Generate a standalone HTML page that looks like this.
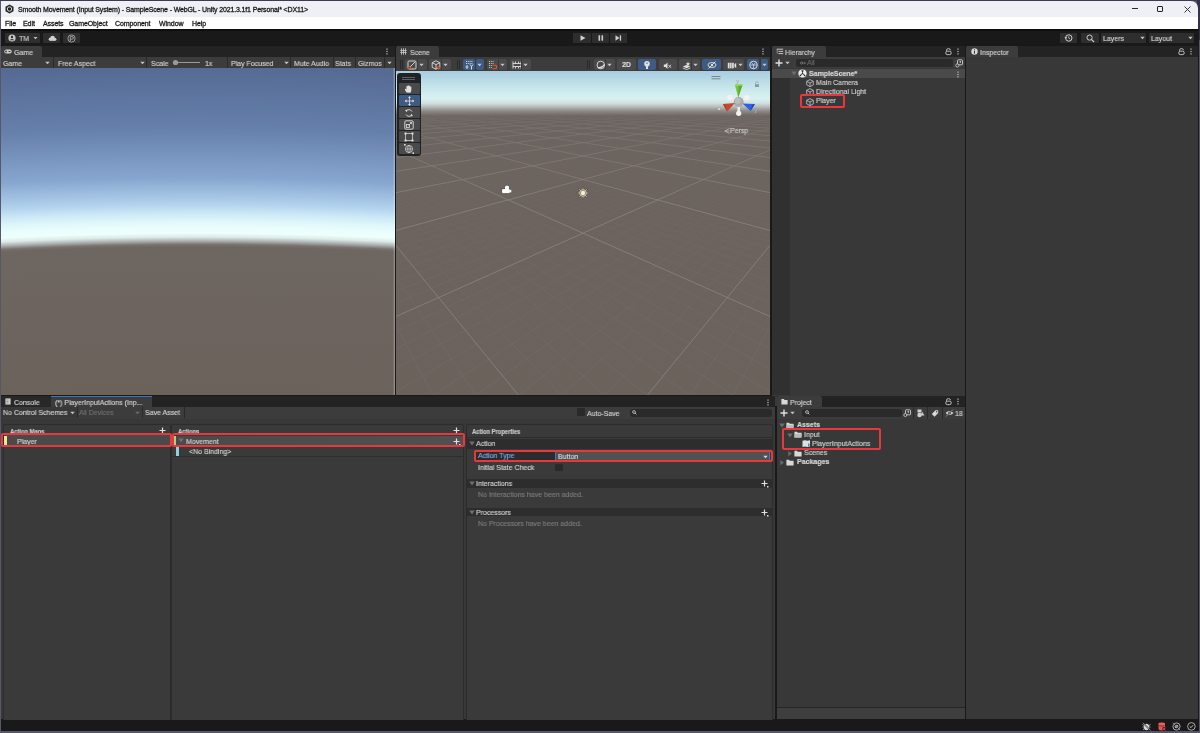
<!DOCTYPE html>
<html><head><meta charset="utf-8">
<style>
*{box-sizing:border-box;margin:0;padding:0}
html,body{width:1200px;height:733px;overflow:hidden;background:#191919;font-family:"Liberation Sans",sans-serif;color:#c4c4c4;position:relative}
.a{position:absolute}
.t{position:absolute;white-space:nowrap;will-change:transform;-webkit-text-stroke:0.18px currentColor}
svg.a{overflow:visible}
</style></head><body>
<div class="a" style="left:0px;top:0px;width:1200px;height:733px;background:#58576a;"></div>
<div class="a" style="left:0px;top:0px;width:1200px;height:1px;background:#3e3a56;"></div>
<div class="a" style="left:1197px;top:0px;width:3px;height:40px;background:#34324a;"></div>
<div class="a" style="left:1px;top:1px;width:1197px;height:17px;background:#eff0f5;border-top-right-radius:7px;border-top-left-radius:0"></div>
<div class="a" style="left:1px;top:17px;width:1197px;height:12px;background:#ffffff;"></div>
<div class="a" style="left:1px;top:29px;width:1198px;height:702px;background:#191919;"></div>
<svg class="a" style="left:5px;top:4px;" width="9" height="10" viewBox="0 0 9 10"><path d="M4.5 0.5L8.5 2.8V7.2L4.5 9.5L0.5 7.2V2.8Z" fill="#222"/><circle cx="4.5" cy="5" r="2.2" fill="none" stroke="#eee" stroke-width="0.9"/></svg>
<div class="t" style="left:17.5px;top:5.57px;font-size:7.00px;line-height:7.00px;color:#1a1a1a;letter-spacing:-0.14px;-webkit-text-stroke:0.3px #1a1a1a">Smooth Movement (Input System) - SampleScene - WebGL - Unity 2021.3.1f1 Personal* &lt;DX11&gt;</div>
<div class="a" style="left:1131.5px;top:8px;width:6.5px;height:1px;background:#2a2a2a;"></div>
<div class="a" style="left:1157px;top:5.8px;width:6.2px;height:6px;border:1px solid #222;border-radius:1px;"></div>
<svg class="a" style="left:1183.5px;top:5.5px;" width="7" height="7" viewBox="0 0 7 7"><path d="M0.5 0.5L6.5 6.5M6.5 0.5L0.5 6.5" stroke="#222" stroke-width="0.9"/></svg>
<div class="t" style="left:4.7px;top:19.57px;font-size:7.00px;line-height:7.00px;color:#1a1a1a;letter-spacing:-0.08px;-webkit-text-stroke:0.3px #1a1a1a">File</div>
<div class="t" style="left:22.5px;top:19.57px;font-size:7.00px;line-height:7.00px;color:#1a1a1a;letter-spacing:-0.08px;-webkit-text-stroke:0.3px #1a1a1a">Edit</div>
<div class="t" style="left:42.5px;top:19.57px;font-size:7.00px;line-height:7.00px;color:#1a1a1a;letter-spacing:-0.08px;-webkit-text-stroke:0.3px #1a1a1a">Assets</div>
<div class="t" style="left:69px;top:19.57px;font-size:7.00px;line-height:7.00px;color:#1a1a1a;letter-spacing:-0.08px;-webkit-text-stroke:0.3px #1a1a1a">GameObject</div>
<div class="t" style="left:114.7px;top:19.57px;font-size:7.00px;line-height:7.00px;color:#1a1a1a;letter-spacing:-0.08px;-webkit-text-stroke:0.3px #1a1a1a">Component</div>
<div class="t" style="left:159px;top:19.57px;font-size:7.00px;line-height:7.00px;color:#1a1a1a;letter-spacing:-0.08px;-webkit-text-stroke:0.3px #1a1a1a">Window</div>
<div class="t" style="left:192px;top:19.57px;font-size:7.00px;line-height:7.00px;color:#1a1a1a;letter-spacing:-0.08px;-webkit-text-stroke:0.3px #1a1a1a">Help</div>
<div class="a" style="left:1px;top:29px;width:1197px;height:2px;background:#0e0e0e;"></div>
<div class="a" style="left:5px;top:33px;width:35px;height:10px;background:#2e2e2e;border-radius:1px"></div>
<svg class="a" style="left:8px;top:34px;" width="8" height="8" viewBox="0 0 8 8"><circle cx="4" cy="4" r="3.6" fill="#c8c8c8"/><circle cx="4" cy="3" r="1.2" fill="#2e2e2e"/><path d="M1.8 6.3Q4 3.8 6.2 6.3" fill="#2e2e2e"/></svg>
<div class="t" style="left:19px;top:35.18px;font-size:7.70px;line-height:7.70px;color:#c4c4c4;transform:scaleX(0.9091);transform-origin:0 0;">TM</div>
<svg class="a" style="left:33px;top:36px;" width="5" height="4" viewBox="0 0 5 4"><path d="M0.5 1L4.5 1L2.5 3.2Z" fill="#c4c4c4"/></svg>
<div class="a" style="left:43px;top:33px;width:17px;height:10px;background:#2e2e2e;border-radius:1px"></div>
<svg class="a" style="left:47.5px;top:34.5px;" width="9" height="7" viewBox="0 0 9 7"><circle cx="4.6" cy="3" r="2.3" fill="#d0d0d0"/><circle cx="2.3" cy="4.2" r="1.6" fill="#d0d0d0"/><circle cx="6.9" cy="4.3" r="1.5" fill="#d0d0d0"/><rect x="2.2" y="3.8" width="4.8" height="2" fill="#d0d0d0"/></svg>
<div class="a" style="left:63px;top:33px;width:17px;height:10px;background:#2e2e2e;border-radius:1px"></div>
<svg class="a" style="left:67px;top:34px;" width="9" height="9" viewBox="0 0 9 9"><circle cx="4.5" cy="4.5" r="3.6" fill="none" stroke="#b8b8b8" stroke-width="0.8"/><path d="M3.3 7V2.6H5Q6.4 2.6 6.4 3.9Q6.4 5.2 5 5.2H3.3" fill="none" stroke="#b8b8b8" stroke-width="0.8"/></svg>
<div class="a" style="left:573px;top:33px;width:18px;height:10px;background:#2d2d2d;border-radius:1px"></div>
<div class="a" style="left:592px;top:33px;width:17px;height:10px;background:#2d2d2d;border-radius:1px"></div>
<div class="a" style="left:610px;top:33px;width:17px;height:10px;background:#2d2d2d;border-radius:1px"></div>
<svg class="a" style="left:579.7px;top:35px;" width="6" height="6" viewBox="0 0 6 6"><path d="M0.5 0.3L5.5 3L0.5 5.7Z" fill="#d0d0d0"/></svg>
<svg class="a" style="left:598px;top:35px;" width="6" height="6" viewBox="0 0 6 6"><rect x="0.5" y="0.3" width="1.6" height="5.4" fill="#d0d0d0"/><rect x="3.5" y="0.3" width="1.6" height="5.4" fill="#d0d0d0"/></svg>
<svg class="a" style="left:615px;top:35px;" width="7" height="6" viewBox="0 0 7 6"><path d="M0.5 0.3L4.5 3L0.5 5.7Z" fill="#d0d0d0"/><rect x="4.8" y="0.3" width="1.3" height="5.4" fill="#d0d0d0"/></svg>
<div class="a" style="left:1060px;top:33px;width:17px;height:10px;background:#2e2e2e;border-radius:1px"></div>
<div class="a" style="left:1081px;top:33px;width:18px;height:10px;background:#2e2e2e;border-radius:1px"></div>
<svg class="a" style="left:1064px;top:34px;" width="9" height="8" viewBox="0 0 9 8"><circle cx="4.8" cy="4" r="3.2" fill="none" stroke="#ccc" stroke-width="1"/><path d="M4.8 2.2V4.2L6.2 5" stroke="#ccc" stroke-width="0.8" fill="none"/><path d="M0.3 3.2L2 4.8L3.2 3" fill="#ccc"/></svg>
<svg class="a" style="left:1086px;top:34px;" width="9" height="9" viewBox="0 0 9 9"><circle cx="3.6" cy="3.6" r="2.6" fill="none" stroke="#ccc" stroke-width="1"/><path d="M5.4 5.4L8 8" stroke="#ccc" stroke-width="1.2"/></svg>
<div class="a" style="left:1101px;top:33px;width:45px;height:10px;background:#2e2e2e;border-radius:1px"></div>
<div class="a" style="left:1149px;top:33px;width:45px;height:10px;background:#2e2e2e;border-radius:1px"></div>
<div class="t" style="left:1103px;top:35.18px;font-size:7.70px;line-height:7.70px;color:#cecece;transform:scaleX(0.9091);transform-origin:0 0;">Layers</div>
<svg class="a" style="left:1140px;top:36px;" width="5" height="4" viewBox="0 0 5 4"><path d="M0.3 0.8L4.7 0.8L2.5 3.2Z" fill="#c4c4c4"/></svg>
<div class="t" style="left:1151px;top:35.18px;font-size:7.70px;line-height:7.70px;color:#cecece;transform:scaleX(0.9091);transform-origin:0 0;">Layout</div>
<svg class="a" style="left:1188px;top:36px;" width="5" height="4" viewBox="0 0 5 4"><path d="M0.3 0.8L4.7 0.8L2.5 3.2Z" fill="#c4c4c4"/></svg>
<div class="a" style="left:1px;top:46px;width:394px;height:11px;background:#232323;"></div>
<div class="a" style="left:1px;top:46px;width:41px;height:11px;background:#3c3c3c;border-radius:2px 2px 0 0"></div>
<svg class="a" style="left:4px;top:49px;" width="8" height="5" viewBox="0 0 8 5"><rect x="0.3" y="0.5" width="7.4" height="4" rx="2" fill="#d0d0d0"/><circle cx="2" cy="2.5" r="0.9" fill="#3c3c3c"/><rect x="4.5" y="2" width="2" height="1" fill="#3c3c3c"/></svg>
<div class="t" style="left:13.7px;top:48.58px;font-size:7.70px;line-height:7.70px;color:#cecece;transform:scaleX(0.9091);transform-origin:0 0;">Game</div>
<svg class="a" style="left:386px;top:48px;" width="2" height="7" viewBox="0 0 2 7"><rect x="0.4" y="0.5" width="1.2" height="1.2" fill="#c4c4c4"/><rect x="0.4" y="2.9" width="1.2" height="1.2" fill="#c4c4c4"/><rect x="0.4" y="5.3" width="1.2" height="1.2" fill="#c4c4c4"/></svg>
<div class="a" style="left:1px;top:57px;width:394px;height:11px;background:#3c3c3c;"></div>
<div class="a" style="left:53px;top:57px;width:1px;height:11px;background:#2a2a2a;"></div>
<div class="a" style="left:146px;top:57px;width:1px;height:11px;background:#2a2a2a;"></div>
<div class="a" style="left:227px;top:57px;width:1px;height:11px;background:#2a2a2a;"></div>
<div class="a" style="left:290px;top:57px;width:1px;height:11px;background:#2a2a2a;"></div>
<div class="a" style="left:333px;top:57px;width:1px;height:11px;background:#2a2a2a;"></div>
<div class="a" style="left:355px;top:57px;width:1px;height:11px;background:#2a2a2a;"></div>
<div class="a" style="left:384px;top:57px;width:1px;height:11px;background:#2a2a2a;"></div>
<div class="t" style="left:3px;top:59.78px;font-size:7.70px;line-height:7.70px;color:#cecece;transform:scaleX(0.9091);transform-origin:0 0;">Game</div>
<svg class="a" style="left:45px;top:61px;" width="5" height="4" viewBox="0 0 5 4"><path d="M0.3 0.8L4.7 0.8L2.5 3.2Z" fill="#c4c4c4"/></svg>
<div class="t" style="left:57.5px;top:59.78px;font-size:7.70px;line-height:7.70px;color:#cecece;transform:scaleX(0.9091);transform-origin:0 0;">Free Aspect</div>
<svg class="a" style="left:139.5px;top:61px;" width="5" height="4" viewBox="0 0 5 4"><path d="M0.3 0.8L4.7 0.8L2.5 3.2Z" fill="#c4c4c4"/></svg>
<div class="t" style="left:150.5px;top:59.78px;font-size:7.70px;line-height:7.70px;color:#cecece;transform:scaleX(0.9091);transform-origin:0 0;">Scale</div>
<div class="a" style="left:175px;top:62.2px;width:25px;height:0.8px;background:#999;"></div>
<svg class="a" style="left:172px;top:59px;" width="7" height="7" viewBox="0 0 7 7"><circle cx="3.5" cy="3.5" r="2.6" fill="#9a9a9a"/></svg>
<div class="t" style="left:204.7px;top:59.78px;font-size:7.70px;line-height:7.70px;color:#cecece;transform:scaleX(0.9091);transform-origin:0 0;">1x</div>
<div class="t" style="left:230.5px;top:59.78px;font-size:7.70px;line-height:7.70px;color:#cecece;transform:scaleX(0.9091);transform-origin:0 0;">Play Focused</div>
<svg class="a" style="left:283.5px;top:61px;" width="5" height="4" viewBox="0 0 5 4"><path d="M0.3 0.8L4.7 0.8L2.5 3.2Z" fill="#c4c4c4"/></svg>
<div class="t" style="left:293.7px;top:59.78px;font-size:7.70px;line-height:7.70px;color:#cecece;transform:scaleX(0.9091);transform-origin:0 0;">Mute Audio</div>
<div class="t" style="left:335.3px;top:59.78px;font-size:7.70px;line-height:7.70px;color:#cecece;transform:scaleX(0.9091);transform-origin:0 0;">Stats</div>
<div class="t" style="left:357.5px;top:59.78px;font-size:7.70px;line-height:7.70px;color:#cecece;transform:scaleX(0.9091);transform-origin:0 0;">Gizmos</div>
<svg class="a" style="left:386.5px;top:61px;" width="5" height="4" viewBox="0 0 5 4"><path d="M0.3 0.8L4.7 0.8L2.5 3.2Z" fill="#c4c4c4"/></svg>
<svg class="a" style="left:1px;top:68px" width="394" height="327" viewBox="0 0 394 327"><defs><radialGradient id="sky" gradientUnits="userSpaceOnUse" cx="197" cy="4057" r="4057" fx="197" fy="4057"><stop offset="0.91965" stop-color="#6b625c"/><stop offset="0.95588" stop-color="#6e6660"/><stop offset="0.95649" stop-color="#787270"/><stop offset="0.95736" stop-color="#aab0ae"/><stop offset="0.95834" stop-color="#dceae8"/><stop offset="0.95933" stop-color="#eefffc"/><stop offset="0.96056" stop-color="#eafefc"/><stop offset="0.96229" stop-color="#dff6fa"/><stop offset="0.96401" stop-color="#cdeaf6"/><stop offset="0.96672" stop-color="#b0d0ec"/><stop offset="0.97289" stop-color="#87a6cf"/><stop offset="0.98521" stop-color="#6580ab"/><stop offset="1.00000" stop-color="#566b94"/></radialGradient></defs><rect width="394" height="327" fill="url(#sky)"/><rect x="392.6" width="1.4" height="327" fill="#ffffff" opacity="0.25"/></svg>
<div class="a" style="left:396px;top:46px;width:374px;height:11px;background:#232323;"></div>
<div class="a" style="left:396px;top:46px;width:43px;height:11px;background:#3c3c3c;border-radius:2px 2px 0 0"></div>
<svg class="a" style="left:400px;top:48px;" width="7" height="7" viewBox="0 0 7 7"><path d="M1.5 0.3V6.7M3.5 0.3V6.7M5.5 0.3V6.7M0.3 2.5H6.7M0.3 4.5H6.7" stroke="#d0d0d0" stroke-width="0.8"/></svg>
<div class="t" style="left:409.6px;top:48.58px;font-size:7.70px;line-height:7.70px;color:#cecece;transform:scaleX(0.9091);transform-origin:0 0;">Scene</div>
<svg class="a" style="left:762px;top:48px;" width="2" height="7" viewBox="0 0 2 7"><rect x="0.4" y="0.5" width="1.2" height="1.2" fill="#c4c4c4"/><rect x="0.4" y="2.9" width="1.2" height="1.2" fill="#c4c4c4"/><rect x="0.4" y="5.3" width="1.2" height="1.2" fill="#c4c4c4"/></svg>
<div class="a" style="left:396px;top:57px;width:374px;height:14px;background:#3c3c3c;"></div>
<div class="a" style="left:396px;top:70.6px;width:374px;height:1.2px;background:#262626;"></div>
<div class="a" style="left:400px;top:60px;width:0.8px;height:9px;background:#2a2a2a;"></div>
<div class="a" style="left:402px;top:60px;width:0.8px;height:9px;background:#2a2a2a;"></div>
<div class="a" style="left:457px;top:60px;width:0.8px;height:9px;background:#2a2a2a;"></div>
<div class="a" style="left:459px;top:60px;width:0.8px;height:9px;background:#2a2a2a;"></div>
<div class="a" style="left:587px;top:60px;width:0.8px;height:9px;background:#2a2a2a;"></div>
<div class="a" style="left:589px;top:60px;width:0.8px;height:9px;background:#2a2a2a;"></div>
<div class="a" style="left:405.3px;top:59px;width:21.4px;height:11px;background:#4a4a4a;border-radius:2px"></div>
<div class="a" style="left:429px;top:59px;width:21.7px;height:11px;background:#4a4a4a;border-radius:2px"></div>
<div class="a" style="left:463px;top:59px;width:12px;height:11px;background:#3e5b83;border-radius:2px"></div>
<div class="a" style="left:475.5px;top:59px;width:8.5px;height:11px;background:#3e5b83;border-radius:2px"></div>
<div class="a" style="left:486.5px;top:59px;width:20.5px;height:11px;background:#4a4a4a;border-radius:2px"></div>
<div class="a" style="left:509.8px;top:59px;width:21px;height:11px;background:#4a4a4a;border-radius:2px"></div>
<div class="a" style="left:593.8px;top:59px;width:21.2px;height:11px;background:#4a4a4a;border-radius:2px"></div>
<div class="a" style="left:617.4px;top:59px;width:18.3px;height:11px;background:#4a4a4a;border-radius:2px"></div>
<div class="a" style="left:638px;top:59px;width:18px;height:11px;background:#3e5b83;border-radius:2px"></div>
<div class="a" style="left:658.8px;top:59px;width:18px;height:11px;background:#4a4a4a;border-radius:2px"></div>
<div class="a" style="left:679px;top:59px;width:21px;height:11px;background:#4a4a4a;border-radius:2px"></div>
<div class="a" style="left:702.2px;top:59px;width:18.4px;height:11px;background:#3e5b83;border-radius:2px"></div>
<div class="a" style="left:723px;top:59px;width:21px;height:11px;background:#4a4a4a;border-radius:2px"></div>
<div class="a" style="left:746.9px;top:59px;width:12.5px;height:11px;background:#3e5b83;border-radius:2px"></div>
<div class="a" style="left:759.9px;top:59px;width:8px;height:11px;background:#3e5b83;border-radius:2px"></div>
<svg class="a" style="left:418.5px;top:62.5px;" width="5" height="4" viewBox="0 0 5 4"><path d="M0.3 0.8L4.7 0.8L2.5 3.2Z" fill="#c4c4c4"/></svg>
<svg class="a" style="left:442.5px;top:62.5px;" width="5" height="4" viewBox="0 0 5 4"><path d="M0.3 0.8L4.7 0.8L2.5 3.2Z" fill="#c4c4c4"/></svg>
<svg class="a" style="left:477px;top:62.5px;" width="5" height="4" viewBox="0 0 5 4"><path d="M0.3 0.8L4.7 0.8L2.5 3.2Z" fill="#c4c4c4"/></svg>
<svg class="a" style="left:499.5px;top:62.5px;" width="5" height="4" viewBox="0 0 5 4"><path d="M0.3 0.8L4.7 0.8L2.5 3.2Z" fill="#c4c4c4"/></svg>
<svg class="a" style="left:522.5px;top:62.5px;" width="5" height="4" viewBox="0 0 5 4"><path d="M0.3 0.8L4.7 0.8L2.5 3.2Z" fill="#c4c4c4"/></svg>
<svg class="a" style="left:607px;top:62.5px;" width="5" height="4" viewBox="0 0 5 4"><path d="M0.3 0.8L4.7 0.8L2.5 3.2Z" fill="#c4c4c4"/></svg>
<svg class="a" style="left:692.5px;top:62.5px;" width="5" height="4" viewBox="0 0 5 4"><path d="M0.3 0.8L4.7 0.8L2.5 3.2Z" fill="#c4c4c4"/></svg>
<svg class="a" style="left:738px;top:62.5px;" width="5" height="4" viewBox="0 0 5 4"><path d="M0.3 0.8L4.7 0.8L2.5 3.2Z" fill="#c4c4c4"/></svg>
<svg class="a" style="left:761.5px;top:62.5px;" width="5" height="4" viewBox="0 0 5 4"><path d="M0.3 0.8L4.7 0.8L2.5 3.2Z" fill="#c4c4c4"/></svg>
<div class="t" style="left:622px;top:61.38px;font-size:7.70px;line-height:7.70px;color:#dedede;font-weight:bold;transform:scaleX(0.9091);transform-origin:0 0;">2D</div>
<div class="a" style="left:396px;top:71px;width:374px;height:324px;background:linear-gradient(#a8cce0 0px,#c4e4ea 15px,#d8f2f2 27px,#d2e2e2 32px,#b4bab8 36px,#8e8a86 40px,#6c6460 45px,#6b625c 323px);"></div>
<svg class="a" style="left:396px;top:71px" width="374" height="324" viewBox="0 0 374 324"><defs><linearGradient id="fg" x1="0" y1="0" x2="0" y2="324" gradientUnits="userSpaceOnUse"><stop offset="0" stop-color="#000"/><stop offset="0.12" stop-color="#000"/><stop offset="0.175" stop-color="#777"/><stop offset="0.4" stop-color="#fff"/><stop offset="1" stop-color="#fff"/></linearGradient><linearGradient id="fg2" x1="0" y1="0" x2="0" y2="324" gradientUnits="userSpaceOnUse"><stop offset="0" stop-color="#000"/><stop offset="0.13" stop-color="#000"/><stop offset="0.3" stop-color="#444"/><stop offset="0.65" stop-color="#ccc"/><stop offset="1" stop-color="#fff"/></linearGradient><mask id="mk"><rect width="374" height="324" fill="url(#fg)"/></mask><mask id="mk2"><rect width="374" height="324" fill="url(#fg2)"/></mask></defs><path d="M36.7 324.0L0.0 255.0M337.1 324.0L374.0 254.8M79.5 324.0L0.0 206.2M294.3 324.0L374.0 206.1M165.1 324.0L0.0 152.1M208.8 324.0L374.0 152.0M207.9 324.0L0.0 135.6M166.0 324.0L374.0 135.5M250.7 324.0L0.0 122.8M123.2 324.0L374.0 122.7M293.5 324.0L0.0 112.7M80.4 324.0L374.0 112.6M336.3 324.0L0.0 104.4M37.6 324.0L374.0 104.4M374.0 321.0L0.0 97.6M0.0 320.9L374.0 97.5M374.0 297.7L0.0 91.8M0.0 297.6L374.0 91.8M374.0 277.7L0.0 86.9M0.0 277.7L374.0 86.8M374.0 260.5L0.0 82.6M0.0 260.5L374.0 82.6M374.0 232.3L0.0 75.6M0.0 232.2L374.0 75.6M374.0 220.5L0.0 72.7M0.0 220.5L374.0 72.7M374.0 210.1L0.0 70.1M0.0 210.0L374.0 70.1M374.0 200.6L0.0 67.8M0.0 200.6L374.0 67.8M374.0 192.1L0.0 65.7M0.0 192.1L374.0 65.7M374.0 184.4L0.0 63.8M0.0 184.3L374.0 63.7M374.0 177.3L0.0 62.0M0.0 177.3L374.0 62.0M374.0 170.9L0.0 60.4M0.0 170.8L374.0 60.4M374.0 164.9L0.0 59.0M0.0 164.9L374.0 58.9M374.0 154.4L0.0 56.4M0.0 154.4L374.0 56.3M374.0 149.7L0.0 55.2M0.0 149.7L374.0 55.2M374.0 145.3L0.0 54.1M0.0 145.3L374.0 54.1M374.0 141.3L0.0 53.1M0.0 141.2L374.0 53.1M374.0 137.5L0.0 52.2M0.0 137.4L374.0 52.1M374.0 133.9L0.0 51.3M0.0 133.9L374.0 51.3M374.0 130.5L0.0 50.5M0.0 130.5L374.0 50.4M374.0 127.4L0.0 49.7M0.0 127.3L374.0 49.6M374.0 124.4L0.0 48.9M0.0 124.4L374.0 48.9M374.0 118.9L0.0 47.6M0.0 118.9L374.0 47.6M374.0 116.4L0.0 47.0M0.0 116.4L374.0 46.9M374.0 114.0L0.0 46.4M0.0 114.0L374.0 46.4M374.0 111.8L0.0 45.8M0.0 111.8L374.0 45.8M374.0 109.6L0.0 45.3M0.0 109.6L374.0 45.3M374.0 107.6L0.0 44.8M0.0 107.6L374.0 44.8M374.0 105.6L0.0 44.3M0.0 105.6L374.0 44.3M374.0 103.8L0.0 43.8M-0.0 103.7L374.0 43.8M374.0 102.0L0.0 43.4M0.0 102.0L374.0 43.4M374.0 98.7L0.0 42.6M0.0 98.6L374.0 42.5M374.0 97.1L0.0 42.2M0.0 97.1L374.0 42.2M374.0 95.6L0.0 41.8M0.0 95.6L374.0 41.8M374.0 94.2L0.0 41.5M0.0 94.1L374.0 41.4M374.0 92.8L1.4 41.3M0.0 92.8L372.4 41.3M374.0 91.4L3.9 41.3M0.0 91.4L370.0 41.3M374.0 90.2L6.3 41.3M0.0 90.2L367.5 41.3M374.0 88.9L8.8 41.3M0.0 88.9L365.1 41.3M374.0 87.8L11.2 41.3M0.0 87.7L362.6 41.3M374.0 85.5L16.1 41.3M0.0 85.5L357.7 41.3M374.0 84.5L18.6 41.3M0.0 84.4L355.3 41.3M374.0 83.4L21.1 41.3M0.0 83.4L352.8 41.3M374.0 82.4L23.5 41.3M0.0 82.4L350.4 41.3M374.0 81.5L26.0 41.3M0.0 81.5L347.9 41.3M374.0 80.5L28.4 41.3M0.0 80.5L345.5 41.3M374.0 79.6L30.9 41.3M0.0 79.6L343.0 41.3M374.0 78.8L33.3 41.3M0.0 78.8L340.6 41.3M374.0 77.9L35.8 41.3M0.0 77.9L338.1 41.3M374.0 76.3L40.7 41.3M0.0 76.3L333.2 41.3M374.0 75.5L43.1 41.3M0.0 75.5L330.7 41.3M374.0 74.8L45.6 41.3M0.0 74.8L328.3 41.3M374.0 74.1L48.0 41.3M0.0 74.1L325.8 41.3M374.0 73.4L50.5 41.3M0.0 73.4L323.4 41.3M374.0 72.7L52.9 41.3M0.0 72.7L320.9 41.3M374.0 72.0L55.4 41.3M0.0 72.0L318.5 41.3M374.0 71.4L57.8 41.3M0.0 71.3L316.0 41.3M374.0 70.7L60.3 41.3M0.0 70.7L313.6 41.3M374.0 69.5L65.2 41.3M0.0 69.5L308.7 41.3M374.0 68.9L67.7 41.3M0.0 68.9L306.2 41.3M374.0 68.4L70.1 41.3M0.0 68.3L303.8 41.3M374.0 67.8L72.6 41.3M0.0 67.8L301.3 41.3M374.0 67.3L75.0 41.3M0.0 67.3L298.9 41.3M374.0 66.7L77.5 41.3M0.0 66.7L296.4 41.3M374.0 66.2L79.9 41.3M0.0 66.2L294.0 41.3M374.0 65.7L82.4 41.3M0.0 65.7L291.5 41.3M374.0 65.2L84.8 41.3M0.0 65.2L289.0 41.3M374.0 64.3L89.7 41.3M0.0 64.3L284.1 41.3M374.0 63.8L92.2 41.3M0.0 63.8L281.7 41.3M374.0 63.4L94.6 41.3M0.0 63.4L279.2 41.3M374.0 62.9L97.1 41.3M0.0 62.9L276.8 41.3M374.0 62.5L99.5 41.3M0.0 62.5L274.3 41.3M374.0 62.1L102.0 41.3M0.0 62.1L271.9 41.3M374.0 61.7L104.4 41.3M0.0 61.7L269.4 41.3M374.0 61.3L106.9 41.3M0.0 61.3L267.0 41.3M374.0 60.9L109.3 41.3M0.0 60.9L264.5 41.3M374.0 60.1L114.3 41.3M0.0 60.1L259.6 41.3M374.0 59.8L116.7 41.3M0.0 59.8L257.2 41.3M374.0 59.4L119.2 41.3M0.0 59.4L254.7 41.3M374.0 59.0L121.6 41.3M0.0 59.0L252.3 41.3M374.0 58.7L124.1 41.3M0.0 58.7L249.8 41.3M374.0 58.4L126.5 41.3M0.0 58.3L247.4 41.3M374.0 58.0L129.0 41.3M0.0 58.0L244.9 41.3M374.0 57.7L131.4 41.3M0.0 57.7L242.4 41.3M374.0 57.4L133.9 41.3M0.0 57.4L240.0 41.3M374.0 56.8L138.8 41.3M0.0 56.7L235.1 41.3M374.0 56.5L141.2 41.3M0.0 56.4L232.6 41.3M374.0 56.2L143.7 41.3M0.0 56.1L230.2 41.3M374.0 55.9L146.1 41.3M0.0 55.9L227.7 41.3M374.0 55.6L148.6 41.3M0.0 55.6L225.3 41.3M374.0 55.3L151.0 41.3M0.0 55.3L222.8 41.3M374.0 55.0L153.5 41.3M0.0 55.0L220.4 41.3M374.0 54.7L156.0 41.3M0.0 54.7L217.9 41.3M374.0 54.5L158.4 41.3M0.0 54.5L215.5 41.3M374.0 54.0L163.3 41.3M0.0 54.0L210.6 41.3M374.0 53.7L165.8 41.3M0.0 53.7L208.1 41.3M374.0 53.5L168.2 41.3M0.0 53.4L205.7 41.3M374.0 53.2L170.7 41.3M0.0 53.2L203.2 41.3M374.0 53.0L173.1 41.3M0.0 53.0L200.8 41.3M374.0 52.7L175.6 41.3M0.0 52.7L198.3 41.3M374.0 52.5L178.0 41.3M0.0 52.5L195.8 41.3M374.0 52.3L180.5 41.3M0.0 52.3L193.4 41.3M374.0 52.0L182.9 41.3M0.0 52.0L190.9 41.3M374.0 51.6L187.8 41.3M0.0 51.6L186.0 41.3M374.0 51.4L190.3 41.3M0.0 51.4L183.6 41.3M374.0 51.2L192.7 41.3M0.0 51.2L181.1 41.3M374.0 51.0L195.2 41.3M0.0 51.0L178.7 41.3M374.0 50.8L197.6 41.3M0.0 50.8L176.2 41.3M374.0 50.6L200.1 41.3M0.0 50.6L173.8 41.3M374.0 50.4L202.6 41.3M0.0 50.4L171.3 41.3M374.0 50.2L205.0 41.3M0.0 50.2L168.9 41.3M374.0 50.0L207.5 41.3M0.0 50.0L166.4 41.3M374.0 49.6L212.4 41.3M0.0 49.6L161.5 41.3M374.0 49.4L214.8 41.3M0.0 49.4L159.1 41.3M374.0 49.2L217.3 41.3M0.0 49.2L156.6 41.3M374.0 49.0L219.7 41.3M0.0 49.0L154.2 41.3M374.0 48.9L222.2 41.3M0.0 48.9L151.7 41.3M374.0 48.7L224.6 41.3M0.0 48.7L149.2 41.3M374.0 48.5L227.1 41.3M0.0 48.5L146.8 41.3M374.0 48.4L229.5 41.3M0.0 48.3L144.3 41.3M374.0 48.2L232.0 41.3M0.0 48.2L141.9 41.3M374.0 47.9L236.9 41.3M0.0 47.9L137.0 41.3M374.0 47.7L239.3 41.3M0.0 47.7L134.5 41.3M374.0 47.5L241.8 41.3M0.0 47.5L132.1 41.3M374.0 47.4L244.2 41.3M0.0 47.4L129.6 41.3M374.0 47.2L246.7 41.3M0.0 47.2L127.2 41.3M374.0 47.1L249.2 41.3M0.0 47.1L124.7 41.3M374.0 46.9L251.6 41.3M0.0 46.9L122.3 41.3M374.0 46.8L254.1 41.3M0.0 46.8L119.8 41.3M374.0 46.6L256.5 41.3M0.0 46.6L117.4 41.3M374.0 46.3L261.4 41.3M0.0 46.3L112.5 41.3M374.0 46.2L263.9 41.3M0.0 46.2L110.0 41.3M374.0 46.1L266.3 41.3M0.0 46.1L107.6 41.3M374.0 45.9L268.8 41.3M0.0 45.9L105.1 41.3M374.0 45.8L271.2 41.3M0.0 45.8L102.6 41.3M374.0 45.7L273.7 41.3M0.0 45.7L100.2 41.3M374.0 45.5L276.1 41.3M0.0 45.5L97.7 41.3M374.0 45.4L278.6 41.3M0.0 45.4L95.3 41.3M374.0 45.3L281.0 41.3M0.0 45.3L92.8 41.3M374.0 45.0L285.9 41.3M0.0 45.0L87.9 41.3M374.0 44.9L288.4 41.3M0.0 44.9L85.5 41.3M374.0 44.8L290.8 41.3M0.0 44.8L83.0 41.3M374.0 44.6L293.3 41.3M0.0 44.6L80.6 41.3M374.0 44.5L295.8 41.3M0.0 44.5L78.1 41.3M374.0 44.4L298.2 41.3M0.0 44.4L75.7 41.3M374.0 44.3L300.7 41.3M0.0 44.3L73.2 41.3M374.0 44.2L303.1 41.3M0.0 44.2L70.8 41.3M374.0 44.1L305.6 41.3M0.0 44.0L68.3 41.3" stroke="#736c67" stroke-width="0.7" fill="none" mask="url(#mk2)"/><path d="M122.3 324.0L0.0 174.5M251.6 324.0L374.0 174.3M374.0 245.5L0.0 78.9M0.0 245.5L374.0 78.9M374.0 159.5L0.0 57.6M0.0 159.4L374.0 57.6M374.0 121.6L0.0 48.2M0.0 121.6L374.0 48.2M374.0 100.3L0.0 43.0M0.0 100.3L374.0 43.0M374.0 86.6L13.7 41.3M0.0 86.6L360.2 41.3M374.0 77.1L38.2 41.3M0.0 77.1L335.7 41.3M374.0 70.1L62.7 41.3M0.0 70.1L311.1 41.3M374.0 64.7L87.3 41.3M0.0 64.7L286.6 41.3M374.0 60.5L111.8 41.3M0.0 60.5L262.1 41.3M374.0 57.1L136.3 41.3M0.0 57.1L237.5 41.3M374.0 54.2L160.9 41.3M0.0 54.2L213.0 41.3M374.0 51.8L185.4 41.3M0.0 51.8L188.5 41.3M374.0 49.8L209.9 41.3M0.0 49.8L164.0 41.3M374.0 48.0L234.4 41.3M0.0 48.0L139.4 41.3M374.0 46.5L259.0 41.3M0.0 46.5L114.9 41.3M374.0 45.1L283.5 41.3M0.0 45.1L90.4 41.3M374.0 43.9L308.0 41.3M0.0 43.9L65.9 41.3" stroke="#88827e" stroke-width="0.85" fill="none" mask="url(#mk)"/></svg>
<div class="a" style="left:397.3px;top:73.3px;width:23.7px;height:82.5px;background:#1f2326;border-radius:3px"></div>
<div class="a" style="left:402px;top:76.5px;width:13px;height:0.8px;background:#5a6066;"></div>
<div class="a" style="left:402px;top:78.5px;width:13px;height:0.8px;background:#5a6066;"></div>
<div class="a" style="left:398.8px;top:83px;width:20.9px;height:11.2px;background:#4a4a4a;border-radius:1px"></div>
<div class="a" style="left:398.8px;top:94.5px;width:20.9px;height:11.2px;background:#3e5b83;border-radius:1px"></div>
<div class="a" style="left:398.8px;top:106.5px;width:20.9px;height:11.2px;background:#4a4a4a;border-radius:1px"></div>
<div class="a" style="left:398.8px;top:118.5px;width:20.9px;height:11.2px;background:#4a4a4a;border-radius:1px"></div>
<div class="a" style="left:398.8px;top:130.5px;width:20.9px;height:11.2px;background:#4a4a4a;border-radius:1px"></div>
<div class="a" style="left:398.8px;top:142.5px;width:20.9px;height:11.2px;background:#4a4a4a;border-radius:1px"></div>
<svg class="a" style="left:700px;top:70px" width="70" height="70" viewBox="0 0 70 70"><path d="M11.5 6.5H20.5M11.5 8.8H20.5" stroke="#6e7e84" stroke-width="0.9"/><path d="M38.7 32L30 27.7M38.7 32L46.8 27.7M38.7 32V43.5" stroke="#ececec" stroke-width="2.6" stroke-linecap="round"/><circle cx="30" cy="27.7" r="2.7" fill="#f2f2f2"/><circle cx="46.8" cy="27.7" r="2.7" fill="#f2f2f2"/><circle cx="38.7" cy="43.3" r="2.6" fill="#f2f2f2"/><circle cx="38.7" cy="32" r="5" fill="#a9a9a9"/><circle cx="37.8" cy="30.8" r="3" fill="#bdbdbd"/><path d="M34.9 14.8L42.5 14.8L38.2 27.5Z" fill="#74c83c"/><path d="M38.7 14.8L42.5 14.8L38.2 27.5Z" fill="#5aa82c"/><ellipse cx="38.7" cy="14.9" rx="3.8" ry="0.9" fill="#8ee05a"/><path d="M22.9 33.9L34.9 33L27.2 41.5Z" fill="#c8462e"/><path d="M22.9 33.9L27.2 41.5L25 35Z" fill="#a83422"/><path d="M42.5 33.4L54.9 33.9L50.6 41.1Z" fill="#2f62dc"/><path d="M54.9 33.9L50.6 41.1L52 35Z" fill="#2048b0"/><text x="36.2" y="13" font-size="5.5" fill="#9a9a9a" font-family="Liberation Sans">y</text><rect x="18.2" y="38.2" width="1.8" height="1.8" fill="#d8d8d8"/><text x="54.5" y="42.5" font-size="5" fill="#b8b8b8" font-family="Liberation Sans">z</text><path d="M55.5 14.5V13.2Q55.5 11.8 57 11.8Q58.5 11.8 58.5 13.2" fill="none" stroke="#8a9aa0" stroke-width="0.7"/><rect x="55" y="14.2" width="4" height="2.8" fill="#8a9aa0"/></svg>
<div class="t" style="left:730px;top:127.18px;font-size:7.70px;line-height:7.70px;color:#c8c8c8;transform:scaleX(0.9091);transform-origin:0 0;">Persp</div>
<svg class="a" style="left:724px;top:128px;" width="6" height="6" viewBox="0 0 6 6"><path d="M5.5 0.5L0.8 3L5.5 5.5M5.5 3H1" stroke="#c8c8c8" stroke-width="0.7" fill="none"/></svg>
<div class="a" style="left:772px;top:46px;width:193px;height:11px;background:#232323;"></div>
<div class="a" style="left:772px;top:46px;width:53.6px;height:11px;background:#3c3c3c;border-radius:2px 2px 0 0"></div>
<svg class="a" style="left:775.5px;top:48px;" width="8" height="7" viewBox="0 0 8 7"><path d="M0.8 1.2H7.2M2.5 3.4H7.2M2.5 5.6H7.2" stroke="#c8c8c8" stroke-width="1"/><path d="M1.2 1.2V5.6" stroke="#c8c8c8" stroke-width="0.6"/></svg>
<div class="t" style="left:785px;top:48.58px;font-size:7.70px;line-height:7.70px;color:#cecece;transform:scaleX(0.9091);transform-origin:0 0;">Hierarchy</div>
<svg class="a" style="left:945px;top:48px;" width="7" height="7" viewBox="0 0 7 7"><path d="M1.5 3V2.2Q1.5 0.6 3.5 0.6Q5.5 0.6 5.5 2.2" fill="none" stroke="#c4c4c4" stroke-width="0.9"/><rect x="0.8" y="3.2" width="5.4" height="3.4" rx="1.5" fill="none" stroke="#c4c4c4" stroke-width="1"/></svg>
<svg class="a" style="left:957px;top:48px;" width="2" height="7" viewBox="0 0 2 7"><rect x="0.4" y="0.5" width="1.2" height="1.2" fill="#c4c4c4"/><rect x="0.4" y="2.9" width="1.2" height="1.2" fill="#c4c4c4"/><rect x="0.4" y="5.3" width="1.2" height="1.2" fill="#c4c4c4"/></svg>
<div class="a" style="left:772px;top:57px;width:193px;height:11px;background:#3c3c3c;"></div>
<div class="a" style="left:772px;top:68px;width:193px;height:338px;background:#383838;"></div>
<div class="a" style="left:772px;top:78px;width:18px;height:317px;background:#303030;"></div>
<svg class="a" style="left:775px;top:59px;" width="8" height="8" viewBox="0 0 8 8"><path d="M4 0.5V7.5M0.5 4H7.5" stroke="#e0e0e0" stroke-width="1.4"/></svg>
<svg class="a" style="left:784.5px;top:61px;" width="5" height="4" viewBox="0 0 5 4"><path d="M0.3 0.8L4.7 0.8L2.5 3.2Z" fill="#c4c4c4"/></svg>
<div class="a" style="left:796.2px;top:58.9px;width:157px;height:7.9px;background:#2a2a2a;border-radius:2px"></div>
<div class="t" style="left:807px;top:59.28px;font-size:7.70px;line-height:7.70px;color:#6a6a6a;transform:scaleX(0.9091);transform-origin:0 0;">All</div>
<div class="a" style="left:772px;top:69.3px;width:193px;height:8.5px;background:#4a4a4a;"></div>
<svg class="a" style="left:790.5px;top:70.5px;" width="6" height="5" viewBox="0 0 6 5"><path d="M0.2 0.5L5.8 0.5L3 4.6Z" fill="#6e6e6e"/></svg>
<svg class="a" style="left:797.5px;top:69.3px;" width="9" height="9" viewBox="0 0 9 9"><circle cx="4.5" cy="4.5" r="4.1" fill="#eeeeee"/><path d="M4.5 4.5L3.3 1.2H5.7Z M4.5 4.5L1.3 6.2L2.5 7.6Z M4.5 4.5L7.7 6.2L6.5 7.6Z" fill="#2a2a2a"/><circle cx="4.5" cy="4.5" r="0.8" fill="#2a2a2a"/></svg>
<div class="t" style="left:808.7px;top:69.98px;font-size:7.70px;line-height:7.70px;color:#d8d8d8;font-weight:bold;transform:scaleX(0.9091);transform-origin:0 0;">SampleScene*</div>
<svg class="a" style="left:957px;top:70.5px;" width="2" height="7" viewBox="0 0 2 7"><rect x="0.4" y="0.5" width="1.2" height="1.2" fill="#c4c4c4"/><rect x="0.4" y="2.9" width="1.2" height="1.2" fill="#c4c4c4"/><rect x="0.4" y="5.3" width="1.2" height="1.2" fill="#c4c4c4"/></svg>
<svg class="a" style="left:806px;top:79.2px;" width="8" height="8" viewBox="0 0 8 8"><path d="M4 0.6L7.3 2.3V5.9L4 7.6L0.7 5.9V2.3Z M0.7 2.3L4 4L7.3 2.3M4 4V7.6" fill="none" stroke="#c8c8c8" stroke-width="0.8"/></svg>
<div class="t" style="left:815.75px;top:79.18px;font-size:7.70px;line-height:7.70px;color:#cecece;transform:scaleX(0.9091);transform-origin:0 0;">Main Camera</div>
<svg class="a" style="left:806px;top:88.3px;" width="8" height="8" viewBox="0 0 8 8"><path d="M4 0.6L7.3 2.3V5.9L4 7.6L0.7 5.9V2.3Z M0.7 2.3L4 4L7.3 2.3M4 4V7.6" fill="none" stroke="#c8c8c8" stroke-width="0.8"/></svg>
<div class="t" style="left:815.75px;top:88.28px;font-size:7.70px;line-height:7.70px;color:#cecece;transform:scaleX(0.9091);transform-origin:0 0;">Directional Light</div>
<svg class="a" style="left:806px;top:97.5px;" width="8" height="8" viewBox="0 0 8 8"><path d="M4 0.6L7.3 2.3V5.9L4 7.6L0.7 5.9V2.3Z M0.7 2.3L4 4L7.3 2.3M4 4V7.6" fill="none" stroke="#c8c8c8" stroke-width="0.8"/></svg>
<div class="t" style="left:815.75px;top:97.48px;font-size:7.70px;line-height:7.70px;color:#cecece;transform:scaleX(0.9091);transform-origin:0 0;">Player</div>
<div class="a" style="left:799.9px;top:93.9px;width:45.4px;height:13.8px;border:2px solid #e8383d;border-radius:2px;"></div>
<div class="a" style="left:966px;top:46px;width:232px;height:11px;background:#232323;"></div>
<div class="a" style="left:966px;top:46px;width:52px;height:11px;background:#3c3c3c;border-radius:2px 2px 0 0"></div>
<svg class="a" style="left:971px;top:48px;" width="7" height="7" viewBox="0 0 7 7"><circle cx="3.5" cy="3.5" r="3.2" fill="#d8d8d8"/><rect x="3" y="2.8" width="1" height="2.8" fill="#333"/><rect x="3" y="1.3" width="1" height="0.9" fill="#333"/></svg>
<div class="t" style="left:979.7px;top:48.58px;font-size:7.70px;line-height:7.70px;color:#cecece;transform:scaleX(0.9091);transform-origin:0 0;">Inspector</div>
<svg class="a" style="left:1178px;top:48px;" width="7" height="7" viewBox="0 0 7 7"><path d="M1.5 3V2.2Q1.5 0.6 3.5 0.6Q5.5 0.6 5.5 2.2" fill="none" stroke="#c4c4c4" stroke-width="0.9"/><rect x="0.8" y="3.2" width="5.4" height="3.4" rx="1.5" fill="none" stroke="#c4c4c4" stroke-width="1"/></svg>
<svg class="a" style="left:1190px;top:48px;" width="2" height="7" viewBox="0 0 2 7"><rect x="0.4" y="0.5" width="1.2" height="1.2" fill="#c4c4c4"/><rect x="0.4" y="2.9" width="1.2" height="1.2" fill="#c4c4c4"/><rect x="0.4" y="5.3" width="1.2" height="1.2" fill="#c4c4c4"/></svg>
<div class="a" style="left:966px;top:57px;width:232px;height:662px;background:#383838;"></div>
<div class="a" style="left:1px;top:396px;width:774px;height:11px;background:#232323;"></div>
<div class="a" style="left:1px;top:396px;width:50px;height:11px;background:#282828;"></div>
<svg class="a" style="left:5px;top:398px;" width="6" height="7" viewBox="0 0 6 7"><rect x="0.4" y="0.4" width="5.2" height="6.2" fill="#d0d0d0"/><path d="M1.3 2H3.5M1.3 3.5H3.5M1.3 5H3.5" stroke="#777" stroke-width="0.6"/></svg>
<div class="t" style="left:13.6px;top:398.58px;font-size:7.70px;line-height:7.70px;color:#cecece;transform:scaleX(0.9091);transform-origin:0 0;">Console</div>
<div class="a" style="left:51px;top:396px;width:101px;height:11px;background:#3c3c3c;border-radius:2px 2px 0 0"></div>
<div class="a" style="left:51px;top:396px;width:101px;height:1px;background:#3a79bb;"></div>
<div class="t" style="left:55px;top:398.58px;font-size:7.70px;line-height:7.70px;color:#cecece;transform:scaleX(0.9091);transform-origin:0 0;">(*) PlayerInputActions (Inp...</div>
<svg class="a" style="left:767px;top:398.5px;" width="2" height="7" viewBox="0 0 2 7"><rect x="0.4" y="0.5" width="1.2" height="1.2" fill="#c4c4c4"/><rect x="0.4" y="2.9" width="1.2" height="1.2" fill="#c4c4c4"/><rect x="0.4" y="5.3" width="1.2" height="1.2" fill="#c4c4c4"/></svg>
<div class="a" style="left:1px;top:407px;width:774px;height:12px;background:#3c3c3c;"></div>
<div class="a" style="left:1.25px;top:407px;width:75.5px;height:11px;background:#383838;"></div>
<div class="t" style="left:3px;top:409.18px;font-size:7.70px;line-height:7.70px;color:#cecece;transform:scaleX(0.9091);transform-origin:0 0;">No Control Schemes</div>
<svg class="a" style="left:70px;top:410.5px;" width="5" height="4" viewBox="0 0 5 4"><path d="M0.3 0.8L4.7 0.8L2.5 3.2Z" fill="#c4c4c4"/></svg>
<div class="a" style="left:77px;top:407px;width:1px;height:11px;background:#2a2a2a;"></div>
<div class="a" style="left:141.5px;top:407px;width:1px;height:11px;background:#2a2a2a;"></div>
<div class="a" style="left:183.5px;top:407px;width:1px;height:11px;background:#2a2a2a;"></div>
<div class="t" style="left:79px;top:409.18px;font-size:7.70px;line-height:7.70px;color:#6e6e6e;transform:scaleX(0.9091);transform-origin:0 0;">All Devices</div>
<svg class="a" style="left:134.5px;top:410.5px;" width="5" height="4" viewBox="0 0 5 4"><path d="M0.3 0.8L4.7 0.8L2.5 3.2Z" fill="#6e6e6e"/></svg>
<div class="t" style="left:145px;top:409.18px;font-size:7.70px;line-height:7.70px;color:#cecece;transform:scaleX(0.9091);transform-origin:0 0;">Save Asset</div>
<div class="a" style="left:576.9px;top:408.3px;width:7.7px;height:7.3px;background:#2a2a2a;border-radius:1px"></div>
<div class="t" style="left:587.3px;top:409.98px;font-size:7.70px;line-height:7.70px;color:#cecece;transform:scaleX(0.9091);transform-origin:0 0;">Auto-Save</div>
<div class="a" style="left:629.6px;top:408.5px;width:142px;height:8px;background:#2a2a2a;border-radius:3px"></div>
<svg class="a" style="left:631.5px;top:410px;" width="5" height="5" viewBox="0 0 5 5"><circle cx="2" cy="2" r="1.4" fill="none" stroke="#ccc" stroke-width="0.8"/><path d="M3 3L4.4 4.4" stroke="#ccc" stroke-width="0.9"/></svg>
<div class="a" style="left:1px;top:419px;width:774px;height:300px;background:#383838;"></div>
<div class="a" style="left:2.5px;top:423.5px;width:168px;height:300px;border:1px solid #2c2c2c;border-radius:2px;background:#3a3a3a"></div>
<div class="a" style="left:171px;top:423.5px;width:293px;height:300px;border:1px solid #2c2c2c;border-radius:2px;background:#3a3a3a"></div>
<div class="a" style="left:465.8px;top:423.5px;width:307.5px;height:300px;border:1px solid #2c2c2c;border-radius:2px;background:#3a3a3a"></div>
<div class="t" style="left:9.6px;top:428.50px;font-size:6.38px;line-height:6.38px;color:#c8c8c8;font-weight:bold;transform:scaleX(0.9091);transform-origin:0 0;">Action Maps</div>
<svg class="a" style="left:158.5px;top:426.5px;" width="7" height="7" viewBox="0 0 7 7"><path d="M3.5 0.5V6.5M0.5 3.5H6.5" stroke="#e0e0e0" stroke-width="1.2"/></svg>
<div class="a" style="left:3.5px;top:435.4px;width:166px;height:9.6px;background:#4a4a4a;"></div>
<div class="a" style="left:3.75px;top:435.6px;width:3px;height:9.2px;background:#f2e68a;"></div>
<div class="t" style="left:16.7px;top:437.73px;font-size:7.70px;line-height:7.70px;color:#cecece;transform:scaleX(0.9091);transform-origin:0 0;">Player</div>
<div class="a" style="left:1.25px;top:433.3px;width:171px;height:13.7px;border:2px solid #e8383d;border-radius:2px;"></div>
<div class="t" style="left:178px;top:428.50px;font-size:6.38px;line-height:6.38px;color:#c8c8c8;font-weight:bold;transform:scaleX(0.9091);transform-origin:0 0;">Actions</div>
<svg class="a" style="left:452.5px;top:426.5px;" width="7" height="7" viewBox="0 0 7 7"><path d="M3.5 0.5V6.5M0.5 3.5H6.5" stroke="#e0e0e0" stroke-width="1.2"/></svg>
<div class="a" style="left:172px;top:435.5px;width:291px;height:9.5px;background:#4a4a4a;background:linear-gradient(90deg,#4a4a4a,#505050)"></div>
<div class="a" style="left:172px;top:435.6px;width:3.5px;height:9.3px;background:#9ed58a;"></div>
<svg class="a" style="left:178.0px;top:437.5px;" width="6" height="5" viewBox="0 0 6 5"><path d="M0.2 0.5L5.8 0.5L3 4.6Z" fill="#6e6e6e"/></svg>
<div class="t" style="left:185.5px;top:437.98px;font-size:7.70px;line-height:7.70px;color:#cecece;transform:scaleX(0.9091);transform-origin:0 0;">Movement</div>
<svg class="a" style="left:452.5px;top:437.5px;" width="8" height="8" viewBox="0 0 8 8"><path d="M3.5 0.5V6.5M0.5 3.5H6.5" stroke="#e0e0e0" stroke-width="1.2"/><rect x="6" y="6" width="1.5" height="1.5" fill="#e0e0e0"/></svg>
<div class="a" style="left:175.5px;top:446px;width:3.5px;height:9.5px;background:#8fd0de;"></div>
<div class="t" style="left:189px;top:447.78px;font-size:7.70px;line-height:7.70px;color:#cecece;transform:scaleX(0.9091);transform-origin:0 0;">&lt;No Binding&gt;</div>
<div class="a" style="left:172px;top:456px;width:291px;height:0.8px;background:#2e2e2e;"></div>
<div class="a" style="left:172px;top:433.3px;width:292.5px;height:13.7px;border:2px solid #e8383d;border-radius:2px;"></div>
<div class="t" style="left:472px;top:429.40px;font-size:6.38px;line-height:6.38px;color:#c8c8c8;font-weight:bold;transform:scaleX(0.9091);transform-origin:0 0;">Action Properties</div>
<div class="a" style="left:466.8px;top:436.5px;width:306px;height:0.8px;background:#2c2c2c;"></div>
<div class="a" style="left:467px;top:438.5px;width:305px;height:10px;background:#2d2d2d;"></div>
<svg class="a" style="left:468.5px;top:441.0px;" width="6" height="5" viewBox="0 0 6 5"><path d="M0.2 0.5L5.8 0.5L3 4.6Z" fill="#6e6e6e"/></svg>
<div class="t" style="left:475.5px;top:440.48px;font-size:7.70px;line-height:7.70px;color:#cecece;transform:scaleX(0.9091);transform-origin:0 0;">Action</div>
<div class="a" style="left:474px;top:452px;width:81px;height:8.4px;background:#2c2c2c;"></div>
<div class="t" style="left:478px;top:452.48px;font-size:7.70px;line-height:7.70px;color:#7ba7e8;transform:scaleX(0.9091);transform-origin:0 0;">Action Type</div>
<div class="a" style="left:555px;top:452px;width:214.6px;height:8.4px;background:#515151;border-radius:1px"></div>
<div class="a" style="left:555px;top:452px;width:0.8px;height:8.4px;background:#3a79bb;"></div>
<div class="a" style="left:768.8px;top:452px;width:0.8px;height:8.4px;background:#3a79bb;"></div>
<div class="t" style="left:558px;top:452.78px;font-size:7.70px;line-height:7.70px;color:#d8d8d8;transform:scaleX(0.9091);transform-origin:0 0;">Button</div>
<svg class="a" style="left:762.5px;top:454.5px;" width="5" height="4" viewBox="0 0 5 4"><path d="M0.3 0.8L4.7 0.8L2.5 3.2Z" fill="#d8d8d8"/></svg>
<div class="a" style="left:473.5px;top:450px;width:299.2px;height:11.9px;border:2px solid #e8383d;border-radius:2px;"></div>
<div class="t" style="left:478px;top:463.98px;font-size:7.70px;line-height:7.70px;color:#cecece;transform:scaleX(0.9091);transform-origin:0 0;">Initial State Check</div>
<div class="a" style="left:555.4px;top:463.5px;width:7.5px;height:7.3px;background:#2a2a2a;border-radius:1px"></div>
<div class="a" style="left:467px;top:479px;width:305px;height:8.6px;background:#2d2d2d;"></div>
<svg class="a" style="left:468.5px;top:481.0px;" width="6" height="5" viewBox="0 0 6 5"><path d="M0.2 0.5L5.8 0.5L3 4.6Z" fill="#6e6e6e"/></svg>
<div class="t" style="left:475.6px;top:480.28px;font-size:7.70px;line-height:7.70px;color:#cecece;transform:scaleX(0.9091);transform-origin:0 0;">Interactions</div>
<svg class="a" style="left:761px;top:480px;" width="8" height="8" viewBox="0 0 8 8"><path d="M3.5 0.5V6.5M0.5 3.5H6.5" stroke="#e0e0e0" stroke-width="1.2"/><rect x="6" y="6" width="1.5" height="1.5" fill="#e0e0e0"/></svg>
<div class="t" style="left:477.6px;top:491.48px;font-size:7.70px;line-height:7.70px;color:#7a7a7a;transform:scaleX(0.9091);transform-origin:0 0;">No Interactions have been added.</div>
<div class="a" style="left:467px;top:507.5px;width:305px;height:8.6px;background:#2d2d2d;"></div>
<svg class="a" style="left:468.5px;top:509.5px;" width="6" height="5" viewBox="0 0 6 5"><path d="M0.2 0.5L5.8 0.5L3 4.6Z" fill="#6e6e6e"/></svg>
<div class="t" style="left:475.6px;top:508.78px;font-size:7.70px;line-height:7.70px;color:#cecece;transform:scaleX(0.9091);transform-origin:0 0;">Processors</div>
<svg class="a" style="left:761px;top:508.5px;" width="8" height="8" viewBox="0 0 8 8"><path d="M3.5 0.5V6.5M0.5 3.5H6.5" stroke="#e0e0e0" stroke-width="1.2"/><rect x="6" y="6" width="1.5" height="1.5" fill="#e0e0e0"/></svg>
<div class="t" style="left:477.6px;top:519.88px;font-size:7.70px;line-height:7.70px;color:#7a7a7a;transform:scaleX(0.9091);transform-origin:0 0;">No Processors have been added.</div>
<div class="a" style="left:777px;top:396px;width:188px;height:11px;background:#232323;"></div>
<div class="a" style="left:777px;top:396px;width:45px;height:11px;background:#3c3c3c;border-radius:2px 2px 0 0"></div>
<svg class="a" style="left:781px;top:398px;" width="7" height="7" viewBox="0 0 7 7"><path d="M0.4 1H2.8L3.6 2H6.6V6.4H0.4Z" fill="#d8d8d8"/></svg>
<div class="t" style="left:790px;top:398.58px;font-size:7.70px;line-height:7.70px;color:#cecece;transform:scaleX(0.9091);transform-origin:0 0;">Project</div>
<svg class="a" style="left:945px;top:398px;" width="7" height="7" viewBox="0 0 7 7"><path d="M1.5 3V2.2Q1.5 0.6 3.5 0.6Q5.5 0.6 5.5 2.2" fill="none" stroke="#c4c4c4" stroke-width="0.9"/><rect x="0.8" y="3.2" width="5.4" height="3.4" rx="1.5" fill="none" stroke="#c4c4c4" stroke-width="1"/></svg>
<svg class="a" style="left:957px;top:398px;" width="2" height="7" viewBox="0 0 2 7"><rect x="0.4" y="0.5" width="1.2" height="1.2" fill="#c4c4c4"/><rect x="0.4" y="2.9" width="1.2" height="1.2" fill="#c4c4c4"/><rect x="0.4" y="5.3" width="1.2" height="1.2" fill="#c4c4c4"/></svg>
<div class="a" style="left:777px;top:407px;width:188px;height:12px;background:#3c3c3c;"></div>
<svg class="a" style="left:780px;top:409px;" width="8" height="8" viewBox="0 0 8 8"><path d="M4 0.5V7.5M0.5 4H7.5" stroke="#e0e0e0" stroke-width="1.4"/></svg>
<svg class="a" style="left:789.5px;top:411px;" width="5" height="4" viewBox="0 0 5 4"><path d="M0.3 0.8L4.7 0.8L2.5 3.2Z" fill="#c4c4c4"/></svg>
<div class="a" style="left:802.2px;top:408.6px;width:99.7px;height:8.2px;background:#2a2a2a;border-radius:3px"></div>
<svg class="a" style="left:804.5px;top:410.3px;" width="5" height="5" viewBox="0 0 5 5"><circle cx="2" cy="2" r="1.4" fill="none" stroke="#ccc" stroke-width="0.8"/><path d="M3 3L4.4 4.4" stroke="#ccc" stroke-width="0.9"/></svg>
<div class="a" style="left:912.8px;top:407px;width:0.8px;height:12px;background:#2a2a2a;"></div>
<div class="a" style="left:927.2px;top:407px;width:0.8px;height:12px;background:#2a2a2a;"></div>
<div class="a" style="left:941.5px;top:407px;width:0.8px;height:12px;background:#2a2a2a;"></div>
<div class="a" style="left:777px;top:419px;width:188px;height:288px;background:#383838;"></div>
<div class="a" style="left:777px;top:707px;width:188px;height:1px;background:#262626;"></div>
<div class="a" style="left:777px;top:708px;width:188px;height:11px;background:#3e3e3e;"></div>
<svg class="a" style="left:779.0px;top:423.0px;" width="6" height="5" viewBox="0 0 6 5"><path d="M0.2 0.5L5.8 0.5L3 4.6Z" fill="#6e6e6e"/></svg>
<svg class="a" style="left:786.3px;top:421.5px;" width="8" height="7" viewBox="0 0 8 7"><path d="M0.4 0.8H3L3.8 1.8H7.6V6.4H0.4Z" fill="#d8d8d8"/><path d="M1 3H7.8L7 6.4H0.4Z" fill="#bbb"/></svg>
<div class="t" style="left:796.5px;top:421.38px;font-size:7.70px;line-height:7.70px;color:#d8d8d8;font-weight:bold;transform:scaleX(0.9091);transform-origin:0 0;">Assets</div>
<svg class="a" style="left:786.5px;top:432.5px;" width="6" height="5" viewBox="0 0 6 5"><path d="M0.2 0.5L5.8 0.5L3 4.6Z" fill="#6e6e6e"/></svg>
<svg class="a" style="left:794px;top:431px;" width="8" height="7" viewBox="0 0 8 7"><path d="M0.4 0.8H3L3.8 1.8H7.6V6.4H0.4Z" fill="#d8d8d8"/><path d="M1 3H7.8L7 6.4H0.4Z" fill="#bbb"/></svg>
<div class="t" style="left:803.5px;top:430.98px;font-size:7.70px;line-height:7.70px;color:#cecece;transform:scaleX(0.9091);transform-origin:0 0;">Input</div>
<svg class="a" style="left:801.6px;top:439.6px;" width="9" height="7" viewBox="0 0 9 7"><path d="M0.5 0.8L3 0.3L5.5 0.8L8 0.3V6.5L5.5 7L3 6.5L0.5 7Z" fill="#e0e0e0"/><rect x="6" y="3.5" width="1.5" height="3" fill="#3a8ad8"/></svg>
<div class="t" style="left:811.8px;top:439.58px;font-size:7.70px;line-height:7.70px;color:#cecece;transform:scaleX(0.9091);transform-origin:0 0;">PlayerInputActions</div>
<svg class="a" style="left:787.5px;top:450.5px;" width="5" height="6" viewBox="0 0 5 6"><path d="M0.3 0L4 2.6L0.3 5.2Z" fill="#6a6a6a"/></svg>
<svg class="a" style="left:794px;top:449.5px;" width="8" height="7" viewBox="0 0 8 7"><path d="M0.4 0.8H3L3.8 1.8H7.6V6.4H0.4Z" fill="#d8d8d8"/></svg>
<div class="t" style="left:803.5px;top:449.18px;font-size:7.70px;line-height:7.70px;color:#cecece;transform:scaleX(0.9091);transform-origin:0 0;">Scenes</div>
<svg class="a" style="left:779.5px;top:459.5px;" width="5" height="6" viewBox="0 0 5 6"><path d="M0.3 0L4 2.6L0.3 5.2Z" fill="#6a6a6a"/></svg>
<svg class="a" style="left:786.3px;top:458.5px;" width="8" height="7" viewBox="0 0 8 7"><path d="M0.4 0.8H3L3.8 1.8H7.6V6.4H0.4Z" fill="#d8d8d8"/></svg>
<div class="t" style="left:796.5px;top:458.38px;font-size:7.70px;line-height:7.70px;color:#d8d8d8;font-weight:bold;transform:scaleX(0.9091);transform-origin:0 0;">Packages</div>
<div class="a" style="left:781.5px;top:428.3px;width:99.7px;height:21.5px;border:2px solid #e8383d;border-radius:2px;"></div>
<div class="t" style="left:954.5px;top:409.98px;font-size:7.70px;line-height:7.70px;color:#cecece;transform:scaleX(0.9091);transform-origin:0 0;">18</div>
<div class="a" style="left:1px;top:719.5px;width:1198px;height:11.5px;background:#191919;border-bottom-right-radius:3px"></div>
<svg class="a" style="left:407px;top:60px;" width="10" height="10" viewBox="0 0 10 10"><rect x="1" y="1" width="8" height="8" rx="1.2" fill="none" stroke="#e0e0e0" stroke-width="0.9"/><path d="M3 7L8 2" stroke="#e0e0e0" stroke-width="0.9"/><circle cx="2.3" cy="7.7" r="1.7" fill="#e05a28"/><circle cx="2.3" cy="7.7" r="0.6" fill="#4a4a4a"/></svg>
<svg class="a" style="left:431px;top:60px;" width="10" height="10" viewBox="0 0 10 10"><path d="M5 0.8L8.8 2.7V7.3L5 9.2L1.2 7.3V2.7Z M1.2 2.7L5 4.6L8.8 2.7M5 4.6V9.2" fill="none" stroke="#e0e0e0" stroke-width="0.85"/><circle cx="7.8" cy="7.8" r="1.7" fill="#e05a28"/><circle cx="7.8" cy="7.8" r="0.6" fill="#4a4a4a"/></svg>
<svg class="a" style="left:465px;top:60px;" width="9" height="10" viewBox="0 0 9 10"><path d="M1 1.5H8M1 3.5H8" stroke="#e0e0e0" stroke-width="0.9" stroke-dasharray="1 0.8"/><path d="M2 5V9M0.5 7H3.5" stroke="#e0e0e0" stroke-width="0.9"/><path d="M5 4.5L6.5 6.5L8 4.5M6.5 6.5V9.5" stroke="#e0e0e0" stroke-width="1" fill="none"/></svg>
<svg class="a" style="left:488px;top:60px;" width="10" height="10" viewBox="0 0 10 10"><path d="M1 1.5H6M1 3.5H6M1 5.5H4M1 7.5H4" stroke="#cfcfcf" stroke-width="0.9" stroke-dasharray="1 0.8"/><path d="M4.5 5.2H7Q8.7 5.2 8.7 7Q8.7 8.8 7 8.8H4.5" fill="none" stroke="#e05a28" stroke-width="1.1"/></svg>
<svg class="a" style="left:512px;top:60px;" width="10" height="10" viewBox="0 0 10 10"><path d="M1 1.5V8.5M9 1.5V8.5M1 3.5H9M1 6.5H9M3.5 1.5V3.5M6.5 1.5V3.5M3.5 6.5V8.5M6.5 6.5V8.5" stroke="#e0e0e0" stroke-width="0.9" fill="none"/></svg>
<svg class="a" style="left:596px;top:60px;" width="10" height="10" viewBox="0 0 10 10"><circle cx="4.8" cy="5" r="3.8" fill="none" stroke="#e0e0e0" stroke-width="0.9"/><path d="M2 7.5Q6 8.5 8.3 4.5" stroke="#e0e0e0" stroke-width="1.2" fill="none"/></svg>
<svg class="a" style="left:643px;top:59.8px;" width="8" height="10" viewBox="0 0 8 10"><circle cx="4" cy="3.8" r="2.8" fill="#e0e0e0"/><rect x="3" y="5.5" width="2" height="3.5" fill="#e0e0e0"/><circle cx="4" cy="3.3" r="0.7" fill="#3e5b83"/></svg>
<svg class="a" style="left:663px;top:60.5px;" width="9" height="9" viewBox="0 0 9 9"><path d="M0.8 3.5H2.5L4.5 1.5V8L2.5 6H0.8Z" fill="#e0e0e0"/><path d="M5.5 3.8L8 6.8M8 3.8L5.5 6.8" stroke="#e0e0e0" stroke-width="0.8"/></svg>
<svg class="a" style="left:682px;top:60.5px;" width="9" height="9" viewBox="0 0 9 9"><path d="M0.8 5.5L4.5 4L8.3 5.5L4.5 7.2Z" fill="#e0e0e0"/><path d="M0.8 7L4.5 8.5L8.3 7" stroke="#e0e0e0" stroke-width="0.8" fill="none"/><path d="M6 0.5L6.6 2.2L8.3 2.4L7 3.4L7.4 5L6 4.1L4.6 5L5 3.4L3.7 2.4L5.4 2.2Z" fill="#e0e0e0"/></svg>
<svg class="a" style="left:706.5px;top:60px;" width="10" height="10" viewBox="0 0 10 10"><ellipse cx="5" cy="5" rx="4" ry="2.5" fill="none" stroke="#e0e0e0" stroke-width="0.9"/><circle cx="5" cy="5" r="1.2" fill="#e0e0e0"/><path d="M1.5 8.5L8.5 1.5" stroke="#e0e0e0" stroke-width="1"/></svg>
<svg class="a" style="left:727px;top:60.5px;" width="10" height="9" viewBox="0 0 10 9"><rect x="0.8" y="1.8" width="6" height="5.5" fill="#e0e0e0"/><path d="M2.7 1.8V7.3M4.7 1.8V7.3" stroke="#4a4a4a" stroke-width="0.5"/><path d="M7.5 3L9.2 2V7L7.5 6Z" fill="#e0e0e0"/></svg>
<svg class="a" style="left:749px;top:60px;" width="9" height="10" viewBox="0 0 9 10"><circle cx="4.5" cy="5" r="3.8" fill="none" stroke="#e0e0e0" stroke-width="0.9"/><path d="M2.5 2.5L4.5 5L6.5 2.5M4.5 5V8.5M1 5H8" stroke="#e0e0e0" stroke-width="0.7" fill="none"/></svg>
<div class="a" style="left:416.5px;top:59px;width:0.8px;height:11px;background:#3a3a3a;"></div>
<div class="a" style="left:440.5px;top:59px;width:0.8px;height:11px;background:#3a3a3a;"></div>
<div class="a" style="left:475px;top:59px;width:0.8px;height:11px;background:#3a3a3a;"></div>
<div class="a" style="left:497.5px;top:59px;width:0.8px;height:11px;background:#3a3a3a;"></div>
<div class="a" style="left:520.5px;top:59px;width:0.8px;height:11px;background:#3a3a3a;"></div>
<div class="a" style="left:605px;top:59px;width:0.8px;height:11px;background:#3a3a3a;"></div>
<div class="a" style="left:690.5px;top:59px;width:0.8px;height:11px;background:#3a3a3a;"></div>
<div class="a" style="left:759.5px;top:59px;width:0.8px;height:11px;background:#3a3a3a;"></div>
<svg class="a" style="left:404px;top:85px;" width="10" height="8" viewBox="0 0 10 8"><path d="M2.5 7.5Q1 5.5 0.8 4Q1.5 3.4 2.4 4.6V1.3Q3 0.6 3.5 1.3V3.8V0.7Q4.2 0 4.8 0.7V3.8V1Q5.5 0.4 6.1 1V4V1.8Q6.8 1.2 7.3 1.8V5.2Q7.3 7 6.2 7.8Z" fill="#e0e0e0"/></svg>
<svg class="a" style="left:403.5px;top:95.5px;" width="11" height="10" viewBox="0 0 11 10"><path d="M5.5 0.5V9.5M1 5H10" stroke="#e0e0e0" stroke-width="0.8"/><path d="M5.5 0.3L4 2H7Z M5.5 9.7L4 8H7Z M0.8 5L2.5 3.5V6.5Z M10.2 5L8.5 3.5V6.5Z" fill="#e0e0e0"/></svg>
<svg class="a" style="left:404px;top:107.5px;" width="10" height="10" viewBox="0 0 10 10"><path d="M8 3.5A3.5 3.5 0 0 0 2 3.2M2 6.5A3.5 3.5 0 0 0 8 6.8" fill="none" stroke="#e0e0e0" stroke-width="0.9"/><path d="M1 2L2.8 4.2L3.5 1.8Z M9 8L7.2 5.8L6.5 8.2Z" fill="#e0e0e0"/></svg>
<svg class="a" style="left:404px;top:119.5px;" width="10" height="10" viewBox="0 0 10 10"><rect x="0.8" y="0.8" width="8.4" height="8.4" rx="1.2" fill="none" stroke="#e0e0e0" stroke-width="0.9"/><rect x="2.5" y="4.5" width="3" height="3" fill="none" stroke="#e0e0e0" stroke-width="0.8"/><path d="M4.5 5.5L7.5 2.5M5.8 2.5H7.5V4.2" stroke="#e0e0e0" stroke-width="0.8" fill="none"/></svg>
<svg class="a" style="left:404px;top:131.5px;" width="10" height="10" viewBox="0 0 10 10"><rect x="1.5" y="1.5" width="7" height="7" fill="none" stroke="#e0e0e0" stroke-width="0.7"/><rect x="0.5" y="0.5" width="2" height="2" fill="#e0e0e0"/><rect x="7.5" y="0.5" width="2" height="2" fill="#e0e0e0"/><rect x="0.5" y="7.5" width="2" height="2" fill="#e0e0e0"/><rect x="7.5" y="7.5" width="2" height="2" fill="#e0e0e0"/></svg>
<svg class="a" style="left:404px;top:143.5px;" width="10" height="10" viewBox="0 0 10 10"><circle cx="5" cy="5" r="3.6" fill="none" stroke="#e0e0e0" stroke-width="0.7"/><path d="M5 1.4V8.6M1.4 5H8.6" stroke="#e0e0e0" stroke-width="0.5"/><ellipse cx="5" cy="5" rx="1.6" ry="3.6" fill="none" stroke="#e0e0e0" stroke-width="0.5"/><rect x="0" y="0" width="1.6" height="1.6" fill="#e0e0e0"/><rect x="8.4" y="8.4" width="1.6" height="1.6" fill="#e0e0e0"/></svg>
<svg class="a" style="left:501px;top:185px;" width="11" height="9" viewBox="0 0 11 9"><g fill="#ffffff" stroke="#3a3430" stroke-width="0.4"><circle cx="6" cy="2.8" r="2.2"/><rect x="1" y="4" width="8" height="4.2" rx="1.2"/><path d="M8.5 5L10.6 4.2V8L8.5 7.2Z"/></g><circle cx="6" cy="2.8" r="2" fill="#fff"/><rect x="1.2" y="4.3" width="7.6" height="3.7" rx="1" fill="#fff"/></svg>
<svg class="a" style="left:576px;top:185.5px;" width="14" height="14" viewBox="0 0 14 14"><g stroke="#2e2a24" stroke-width="0.4" fill="#d9cfaa"><path d="M7 0.3L7.9 3H6.1Z"/><path d="M7 13.7L7.9 11H6.1Z"/><path d="M0.3 7L3 6.1V7.9Z"/><path d="M13.7 7L11 6.1V7.9Z"/><path d="M2.3 2.3L4.6 3.5L3.5 4.6Z"/><path d="M11.7 2.3L10.5 4.6L9.4 3.5Z"/><path d="M2.3 11.7L3.5 9.4L4.6 10.5Z"/><path d="M11.7 11.7L9.4 10.5L10.5 9.4Z"/></g><circle cx="7" cy="7" r="3.3" fill="none" stroke="#d9cfaa" stroke-width="1"/><circle cx="7" cy="7" r="2.2" fill="#f6efd6"/></svg>
<svg class="a" style="left:799.8px;top:60.5px;" width="6" height="5" viewBox="0 0 6 5"><circle cx="1.6" cy="2" r="1.1" fill="none" stroke="#9a9a9a" stroke-width="0.6"/><path d="M2.7 2H5.5M4.3 1L5.4 2L4.3 3" stroke="#9a9a9a" stroke-width="0.55" fill="none"/></svg>
<svg class="a" style="left:955px;top:58.5px;" width="8" height="9" viewBox="0 0 8 9"><rect x="2.5" y="0.8" width="5" height="5" rx="0.8" fill="none" stroke="#d0d0d0" stroke-width="0.9"/><circle cx="2.3" cy="6.5" r="1.6" fill="#383838" stroke="#d0d0d0" stroke-width="0.8"/><rect x="4.6" y="2.2" width="1.4" height="1.4" fill="#e0e0e0"/></svg>
<svg class="a" style="left:902.5px;top:408.5px;" width="8" height="8" viewBox="0 0 8 8"><rect x="2.5" y="0.8" width="5" height="5" rx="0.8" fill="none" stroke="#d0d0d0" stroke-width="0.9"/><circle cx="2.3" cy="6" r="1.5" fill="#383838" stroke="#d0d0d0" stroke-width="0.8"/><rect x="4.6" y="2.2" width="1.4" height="1.4" fill="#e0e0e0"/></svg>
<svg class="a" style="left:916.5px;top:408.5px;" width="8" height="9" viewBox="0 0 8 9"><rect x="0.5" y="0.5" width="4" height="3" fill="#d0d0d0"/><circle cx="2.5" cy="6" r="2.2" fill="#d0d0d0"/><path d="M5 2.5L7.5 6.5H3.8Z" fill="#d0d0d0"/></svg>
<svg class="a" style="left:931px;top:409px;" width="8" height="8" viewBox="0 0 8 8"><path d="M0.8 5L4.5 1.3H7.2V4L3.5 7.7Z" fill="#d8d8d8"/><circle cx="5.7" cy="2.8" r="0.7" fill="#3c3c3c"/></svg>
<svg class="a" style="left:945px;top:409px;" width="9" height="8" viewBox="0 0 9 8"><path d="M0.5 4Q4.5 0 8.5 4Q4.5 8 0.5 4Z" fill="#d0d0d0"/><circle cx="4.5" cy="4" r="1.3" fill="#3c3c3c"/><path d="M1 7.5L8 0.5" stroke="#3c3c3c" stroke-width="1.3"/><path d="M1 7.5L8 0.5" stroke="#d0d0d0" stroke-width="0.6"/></svg>
<svg class="a" style="left:1142px;top:721.5px;" width="9" height="9" viewBox="0 0 9 9"><ellipse cx="4.5" cy="5" rx="2.6" ry="3.2" fill="#d8d8d8"/><path d="M0.5 2.5L2.5 3.8M8.5 2.5L6.5 3.8M0.5 5H2M8.5 5H7M0.8 7.8L2.4 6.5M8.2 7.8L6.6 6.5" stroke="#d8d8d8" stroke-width="0.7"/><path d="M1 0.8L8.5 8.5" stroke="#191919" stroke-width="1.2"/><path d="M1 0.8L8.5 8.5" stroke="#d8d8d8" stroke-width="0.6"/></svg>
<svg class="a" style="left:1157.5px;top:721.5px;" width="8" height="9" viewBox="0 0 8 9"><path d="M0.5 1.8V7Q0.5 8.4 3.5 8.4Q4.2 8.4 4.5 8.3V5.2H7V1.8Z" fill="#e85252"/><ellipse cx="3.75" cy="1.8" rx="3.3" ry="1.4" fill="#f06060"/><path d="M1.2 3.6Q3.7 4.6 6.3 3.6" stroke="#191919" stroke-width="0.5" fill="none"/><path d="M4.8 5.6L7.6 8.4M7.6 5.6L4.8 8.4" stroke="#e85252" stroke-width="0.9"/></svg>
<svg class="a" style="left:1172px;top:721.5px;" width="9" height="9" viewBox="0 0 9 9"><circle cx="4.5" cy="4.5" r="3.6" fill="none" stroke="#d0d0d0" stroke-width="0.8"/><circle cx="4.5" cy="4.5" r="1.8" fill="#d0d0d0"/><path d="M0.8 0.8L8.2 8.2" stroke="#191919" stroke-width="1.2"/><path d="M0.8 0.8L8.2 8.2" stroke="#d0d0d0" stroke-width="0.6"/></svg>
<svg class="a" style="left:1187px;top:722px;" width="9" height="9" viewBox="0 0 9 9"><circle cx="4.4" cy="4.4" r="3.8" fill="none" stroke="#c8c8c8" stroke-width="0.8"/><path d="M2.8 4.5L4 5.6L6 3.3" stroke="#d8d8d8" stroke-width="0.9" fill="none"/></svg>
</body></html>
